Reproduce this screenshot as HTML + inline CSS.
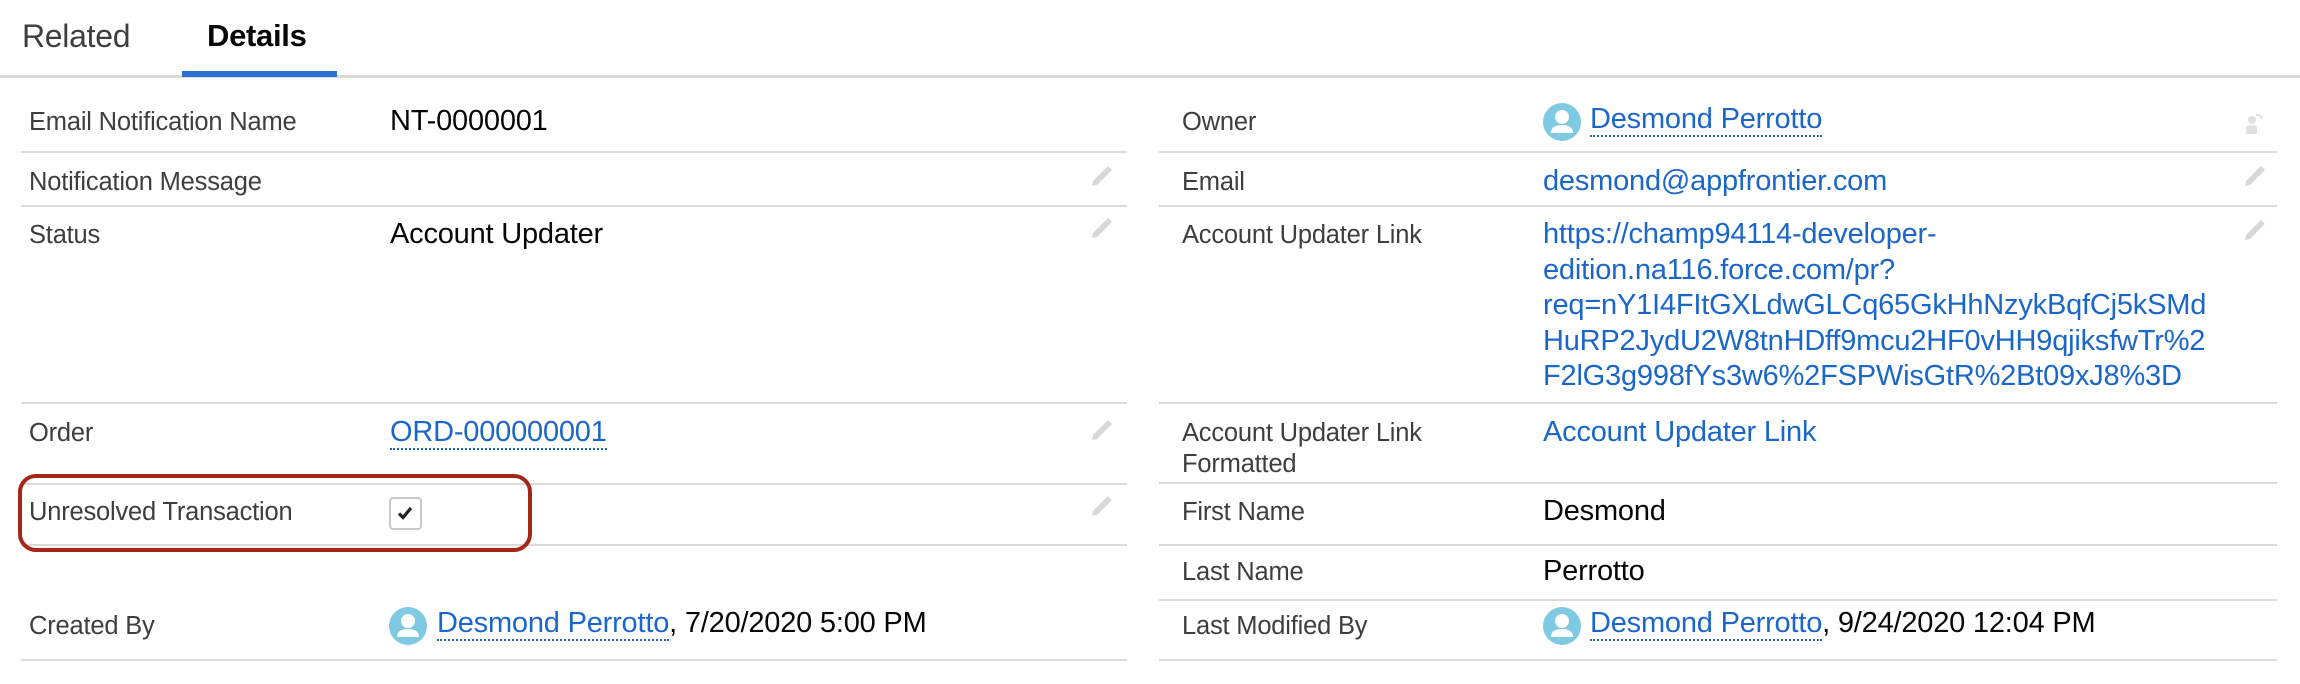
<!DOCTYPE html>
<html><head><meta charset="utf-8"><style>
html,body{margin:0;padding:0;background:#fff;width:2300px;height:684px;overflow:hidden;position:relative;font-family:"Liberation Sans",sans-serif}
.a{position:absolute;white-space:nowrap}
.lb{font-size:25.5px;color:#3e3e3c;line-height:36px;letter-spacing:-0.2px}
.v{font-size:29px;color:#080707;line-height:36px;letter-spacing:-0.2px}
.lk{color:#1b67c9}
.u{border-bottom:2px dotted #1b67c9;line-height:32px;display:inline-block}
.ln{position:absolute;height:2px;background:#dddbda}
.pen{position:absolute;width:26px;height:26px}
.av{position:absolute;width:38px;height:38px}
</style></head><body>
<div class="a" style="left:22px;top:18px;font-size:32px;line-height:36px;color:#3e3e3c;letter-spacing:-0.3px">Related</div>
<div class="a" style="left:207px;top:18px;font-size:31px;line-height:36px;color:#080707;font-weight:bold;letter-spacing:-0.3px">Details</div>
<div class="ln" style="left:0;top:75px;width:2300px;height:3px"></div>
<div style="position:absolute;left:182px;top:71px;width:155px;height:6px;background:#2a70d0"></div>

<div class="ln" style="left:21px;width:1106px;top:151px"></div>
<div class="ln" style="left:21px;width:1106px;top:205px"></div>
<div class="ln" style="left:21px;width:1106px;top:402px"></div>
<div class="ln" style="left:21px;width:1106px;top:483px"></div>
<div class="ln" style="left:21px;width:1106px;top:544px"></div>
<div class="ln" style="left:21px;width:1106px;top:659px"></div>
<div class="ln" style="left:1159px;width:1118px;top:151px"></div>
<div class="ln" style="left:1159px;width:1118px;top:205px"></div>
<div class="ln" style="left:1159px;width:1118px;top:402px"></div>
<div class="ln" style="left:1159px;width:1118px;top:482px"></div>
<div class="ln" style="left:1159px;width:1118px;top:544px"></div>
<div class="ln" style="left:1159px;width:1118px;top:599px"></div>
<div class="ln" style="left:1159px;width:1118px;top:659px"></div>

<div class="a lb" style="left:29px;top:104px">Email Notification Name</div>
<div class="a lb" style="left:29px;top:164px">Notification Message</div>
<div class="a lb" style="left:29px;top:217px">Status</div>
<div class="a lb" style="left:29px;top:415px">Order</div>
<div class="a lb" style="left:29px;top:494px">Unresolved Transaction</div>
<div class="a lb" style="left:29px;top:608px">Created By</div>
<div class="a v" style="left:390px;top:103px">NT-0000001</div>
<div class="a v" style="left:390px;top:216px">Account Updater</div>
<div class="a v lk" style="left:390px;top:414px"><span class="u">ORD-000000001</span></div>
<div style="position:absolute;left:389px;top:497px;width:29px;height:29px;border:2px solid #c9c9c9;border-radius:4px;background:#fff"></div>
<svg class="a" style="left:396px;top:504px" width="18" height="18" viewBox="0 0 18 18"><path d="M3 9.5 L7 13.5 L15 4" fill="none" stroke="#222" stroke-width="3.2"/></svg>
<svg class="av" style="left:389px;top:607px" viewBox="0 0 38 38"><circle cx="19" cy="19" r="19" fill="#7fc9e3"/><circle cx="19" cy="14" r="7" fill="#fff"/><path d="M8 30 Q8 22 19 22 Q30 22 30 30 Z" fill="#fff"/></svg>
<div class="a v" style="left:437px;top:605px"><span class="lk u">Desmond Perrotto</span>, 7/20/2020 5:00 PM</div>

<div style="position:absolute;left:18px;top:474px;width:506px;height:70px;border:4px solid #a3281a;border-radius:18px"></div>

<div class="a lb" style="left:1182px;top:104px">Owner</div>
<div class="a lb" style="left:1182px;top:164px">Email</div>
<div class="a lb" style="left:1182px;top:217px">Account Updater Link</div>
<div class="a lb" style="left:1182px;top:415px">Account Updater Link</div>
<div class="a lb" style="left:1182px;top:446px">Formatted</div>
<div class="a lb" style="left:1182px;top:494px">First Name</div>
<div class="a lb" style="left:1182px;top:554px">Last Name</div>
<div class="a lb" style="left:1182px;top:608px">Last Modified By</div>
<svg class="av" style="left:1543px;top:103px" viewBox="0 0 38 38"><circle cx="19" cy="19" r="19" fill="#7fc9e3"/><circle cx="19" cy="14" r="7" fill="#fff"/><path d="M8 30 Q8 22 19 22 Q30 22 30 30 Z" fill="#fff"/></svg>
<div class="a v" style="left:1590px;top:101px"><span class="lk u">Desmond Perrotto</span></div>
<div class="a v lk" style="left:1543px;top:163px">desmond@appfrontier.com</div>
<div class="a v lk" style="left:1543px;top:217px;line-height:35.5px">https://champ94114-developer-<br>edition.na116.force.com/pr?<br>req=nY1I4FItGXLdwGLCq65GkHhNzykBqfCj5kSMd<br>HuRP2JydU2W8tnHDff9mcu2HF0vHH9qjiksfwTr%2<br>F2lG3g998fYs3w6%2FSPWisGtR%2Bt09xJ8%3D</div>
<div class="a v lk" style="left:1543px;top:414px">Account Updater Link</div>
<div class="a v" style="left:1543px;top:493px">Desmond</div>
<div class="a v" style="left:1543px;top:553px">Perrotto</div>
<svg class="av" style="left:1543px;top:607px" viewBox="0 0 38 38"><circle cx="19" cy="19" r="19" fill="#7fc9e3"/><circle cx="19" cy="14" r="7" fill="#fff"/><path d="M8 30 Q8 22 19 22 Q30 22 30 30 Z" fill="#fff"/></svg>
<div class="a v" style="left:1590px;top:605px"><span class="lk u">Desmond Perrotto</span>, 9/24/2020 12:04 PM</div>

<svg class="pen" style="left:1089px;top:163px" viewBox="0 0 26 26"><path d="M19 3 L23 7 L8 22 L3 23 L4 18 Z" fill="#d8d8d8"/></svg>
<svg class="pen" style="left:1089px;top:215px" viewBox="0 0 26 26"><path d="M19 3 L23 7 L8 22 L3 23 L4 18 Z" fill="#d8d8d8"/></svg>
<svg class="pen" style="left:1089px;top:417px" viewBox="0 0 26 26"><path d="M19 3 L23 7 L8 22 L3 23 L4 18 Z" fill="#d8d8d8"/></svg>
<svg class="pen" style="left:1089px;top:493px" viewBox="0 0 26 26"><path d="M19 3 L23 7 L8 22 L3 23 L4 18 Z" fill="#d8d8d8"/></svg>
<svg class="pen" style="left:2242px;top:163px" viewBox="0 0 26 26"><path d="M19 3 L23 7 L8 22 L3 23 L4 18 Z" fill="#d8d8d8"/></svg>
<svg class="pen" style="left:2242px;top:217px" viewBox="0 0 26 26"><path d="M19 3 L23 7 L8 22 L3 23 L4 18 Z" fill="#d8d8d8"/></svg>
<svg class="pen" style="left:2241px;top:110px" viewBox="0 0 26 26"><circle cx="11" cy="10" r="4" fill="#e0e0e0"/><path d="M5 24 L5 18 Q5 15 11 15 Q16 15 16 18 L16 24 Z" fill="#e0e0e0"/><path d="M15 5 Q20 4 21 9" fill="none" stroke="#e0e0e0" stroke-width="2"/></svg>
</body></html>
